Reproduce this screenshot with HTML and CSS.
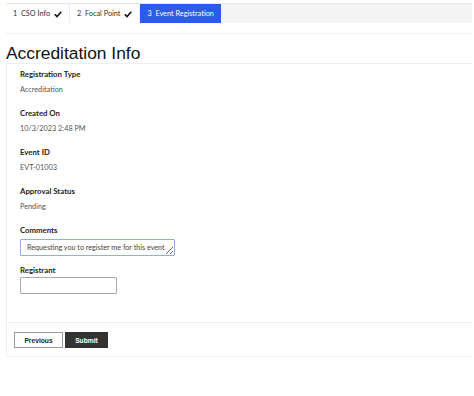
FILE: index.html
```html
<!DOCTYPE html>
<html lang="en">
<head>
  <meta charset="UTF-8">
  <title>Event Registration</title>
  <meta name="viewport" content="width=device-width, initial-scale=1.0">
  <link rel="stylesheet" href="styles.css">
</head>
<body>

<div class="page">
  <nav class="steps">
    <div class="step done">1&nbsp; CSO Info
      <svg class="check" viewBox="0 0 16 16"><path d="M1.5 8.5 L6 13 L14.5 3.5" /></svg>
    </div>
    <div class="step done">2&nbsp; Focal Point
      <svg class="check" viewBox="0 0 16 16"><path d="M1.5 8.5 L6 13 L14.5 3.5" /></svg>
    </div>
    <div class="step active">3&nbsp; Event Registration</div>
  </nav>

  <div class="head">
    <h1>Accreditation Info</h1>
  </div>

  <div class="box">
    <div class="card">
      <div class="field">
        <div class="label">Registration Type</div>
        <div class="value">Accreditation</div>
      </div>
      <div class="field">
        <div class="label">Created On</div>
        <div class="value">10/3/2023 2:48 PM</div>
      </div>
      <div class="field">
        <div class="label">Event ID</div>
        <div class="value">EVT-01003</div>
      </div>
      <div class="field">
        <div class="label">Approval Status</div>
        <div class="value">Pending</div>
      </div>
      <div class="field tight">
        <div class="label">Comments</div>
        <textarea class="comments" rows="1">Requesting you to register me for this event</textarea>
      </div>
      <div class="field">
        <div class="label">Registrant</div>
        <input type="text" class="registrant">
      </div>
    </div>

    <div class="actions">
      <button class="btn">Previous</button>
      <button class="btn primary">Submit</button>
    </div>
  </div>
</div>

</body>
</html>
```

FILE: styles.css
```css
body {
  margin: 0;
  padding: 0;
  background: #fff;
  font-family: 'Segoe UI', 'Lato', sans-serif;
  color: #222;
}
.page {
  width: 466px;
  padding: 3px 0 0 6px;
}
.steps {
  display: flex;
  height: 20px;
  background: #f4f4f4;
  border-top: 1px solid #e8e8e8;
  box-sizing: border-box;
}
.step {
  display: flex;
  align-items: center;
  gap: 4px;
  padding: 0 7px;
  background: #fff;
  border-right: 1px solid #ececec;
  font-size: 7.3px;
  color: #333;
}
.step.active {
  background: #2b5ce9;
  color: #fff;
  border-right: none;
}
.check {
  width: 8px;
  height: 8px;
  fill: none;
  stroke: #111;
  stroke-width: 3.2;
}
.head {
  margin-top: 10px;
  border-top: 1px solid #f1f1f1;
  height: 29px;
  display: flex;
  align-items: flex-end;
}
h1 {
  margin: 0;
  font-family: 'Liberation Sans', Arial, sans-serif;
  font-weight: normal;
  font-size: 17.4px;
  line-height: 20px;
  color: #111;
}
.box {
  border-left: 1px solid #f0f0f0;
}
.card {
  border-top: 1px solid #eeeeee;
  padding: 4px 0 0 13px;
  height: 254px;
}
.field {
  margin-bottom: 11.5px;
}
.field.tight {
  margin-bottom: 8px;
}
.label {
  font-size: 7.8px;
  font-weight: bold;
  line-height: 12px;
  color: #222;
  margin-bottom: 3.5px;
}
.value {
  font-size: 7.3px;
  line-height: 12px;
  color: #555;
}
.comments {
  display: block;
  box-sizing: border-box;
  width: 155px;
  height: 17px;
  margin-top: -1px;
  padding: 2px 6px;
  border: 1px solid #8fb0e6;
  border-radius: 1px;
  font-family: 'Segoe UI', 'Lato', sans-serif;
  font-size: 7.2px;
  line-height: 11px;
  color: #444;
  overflow: hidden;
  white-space: nowrap;
}
.registrant {
  display: block;
  box-sizing: border-box;
  width: 97px;
  height: 17px;
  margin-top: -2px;
  border: 1px solid #aaa;
  border-radius: 1px;
}
.actions {
  display: flex;
  gap: 2px;
  padding: 9px 0 8px 7px;
  border-top: 1px solid #eeeeee;
  border-bottom: 1px solid #f3f3f3;
}
.btn {
  height: 16px;
  width: 49px;
  padding: 0;
  font-family: 'Liberation Sans', Arial, sans-serif;
  font-size: 6.7px;
  font-weight: bold;
  background: #fff;
  color: #222;
  border: 1px solid #999;
  cursor: pointer;
}
.btn.primary {
  width: 43px;
  background: #333;
  color: #fff;
  border-color: #333;
}
```
